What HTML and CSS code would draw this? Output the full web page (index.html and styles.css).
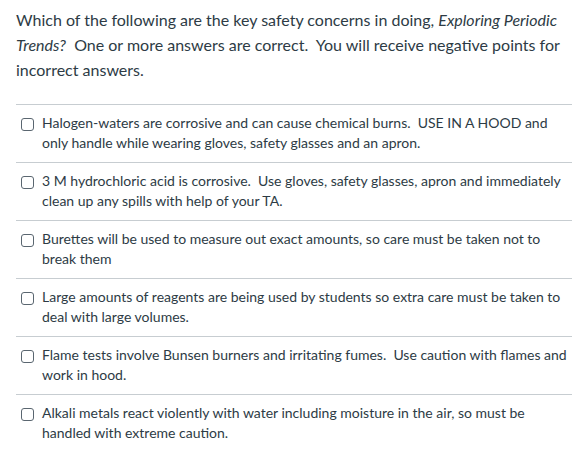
FILE: index.html
```html
<!DOCTYPE html>
<html>
<head>
  <title>Quiz question</title>
  <meta name="viewport" content="width=device-width, initial-scale=1.0">
  <link rel="stylesheet" href="styles.css">
</head>
<body>
  <div class="question">
    <div class="question-text">
      Which of the following are the key safety concerns in doing, <em>Exploring Periodic Trends?</em>&nbsp; One or more answers are correct.&nbsp; You will receive negative points for incorrect answers.
    </div>

    <div class="answers">
      <label class="answer">
        <span class="check"></span>
        <span class="answer-text">Halogen-waters are corrosive and can cause chemical burns.&nbsp; USE IN A HOOD and only handle while wearing gloves, safety glasses and an apron.</span>
      </label>
      <label class="answer">
        <span class="check"></span>
        <span class="answer-text">3 M hydrochloric acid is corrosive.&nbsp; Use gloves, safety glasses, apron and immediately clean up any spills with help of your TA.</span>
      </label>
      <label class="answer">
        <span class="check"></span>
        <span class="answer-text">Burettes will be used to measure out exact amounts, so care must be taken not to break them</span>
      </label>
      <label class="answer">
        <span class="check"></span>
        <span class="answer-text">Large amounts of reagents are being used by students so extra care must be taken to deal with large volumes.</span>
      </label>
      <label class="answer">
        <span class="check"></span>
        <span class="answer-text">Flame tests involve Bunsen burners and irritating fumes.&nbsp; Use caution with flames and work in hood.</span>
      </label>
      <label class="answer">
        <span class="check"></span>
        <span class="answer-text">Alkali metals react violently with water including moisture in the air, so must be handled with extreme caution.</span>
      </label>
    </div>
  </div>
</body>
</html>
```

FILE: styles.css
```css
body {
  margin: 0;
  font-family: Lato, "Liberation Sans", sans-serif;
  color: #2d3b45;
  background: #fff;
}
.question {
  padding: 7px 9px 0 16px;
}
.question-text {
  font-size: 16px;
  line-height: 25px;
  padding-right: 6px;
  margin-bottom: 22px;
}
.answer {
  display: flex;
  align-items: flex-start;
  gap: 8px;
  border-top: 1px solid #c7cdd1;
  padding: 8px 0 9px 5px;
  font-size: 14px;
  line-height: 20px;
}
.check {
  flex: none;
  width: 11px;
  height: 11px;
  margin-top: 5px;
  border: 1px solid #5a6670;
  border-radius: 3px;
  background: #fff;
}
.answer-text {
  flex: 1;
}
```
